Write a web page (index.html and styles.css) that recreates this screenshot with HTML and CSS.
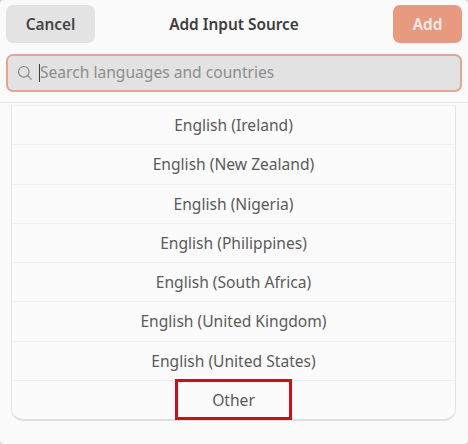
FILE: index.html
```html
<!DOCTYPE html>
<html lang="en">
<head>
    <meta charset="UTF-8">
    <meta name="viewport" content="width=device-width, initial-scale=1.0">
    <title>Add Input Source</title>
    <link rel="stylesheet" href="styles.css">
</head>
<body>
    <div class="dialog">
        <div class="header">
            <div class="title-row">
                <div class="side"><button class="btn cancel-btn">Cancel</button></div>
                <h1>Add Input Source</h1>
                <div class="side side-end"><button class="btn add-btn">Add</button></div>
            </div>
            <div class="search">
                <svg class="search-icon" width="16" height="16" viewBox="0 0 16 16">
                    <circle cx="6.8" cy="6.8" r="5.3" fill="none" stroke="#8a8a88" stroke-width="1.2"/>
                    <path d="M10.8 10.8 L14.6 14.6" stroke="#8a8a88" stroke-width="1.3"/>
                </svg>
                <span class="caret"></span>
                <span class="placeholder">Search languages and countries</span>
            </div>
        </div>
        <div class="content">
            <div class="list">
                <div class="row">English (Ireland)</div>
                <div class="row">English (New Zealand)</div>
                <div class="row">English (Nigeria)</div>
                <div class="row">English (Philippines)</div>
                <div class="row">English (South Africa)</div>
                <div class="row">English (United Kingdom)</div>
                <div class="row">English (United States)</div>
                <div class="row last-row">Other<span class="highlight"></span></div>
            </div>
        </div>
    </div>
</body>
</html>
```

FILE: styles.css
```css
html, body {
    margin: 0;
    padding: 0;
}

body {
    width: 468px;
    height: 444px;
    overflow: hidden;
    background: #cfcfcf;
    font-family: "Noto Sans", sans-serif;
    font-size: 15.6px;
    color: #3d3d3d;
}

.dialog {
    height: 444px;
    background: #fafafa;
    border-radius: 4px;
}

.header {
    height: 103px;
    box-sizing: border-box;
    padding: 5px 6px 0;
    border-bottom: 1px solid #e8e8e8;
}

.title-row {
    display: flex;
    align-items: center;
    height: 38px;
}

.side {
    flex: 1;
    display: flex;
}

.side-end {
    justify-content: flex-end;
}

h1 {
    margin: 0;
    font-size: 15.4px;
    font-weight: 600;
    color: #3d3d3d;
}

.btn {
    height: 38px;
    border: none;
    border-radius: 7px;
    font-family: inherit;
    font-size: 15.4px;
    font-weight: 600;
}

.cancel-btn {
    width: 89px;
    background: #e3e3e3;
    color: #454545;
}

.add-btn {
    width: 69px;
    background: #e89a80;
    color: #fbeee9;
}

.search {
    display: flex;
    align-items: center;
    height: 38px;
    box-sizing: border-box;
    margin-top: 11px;
    padding: 0 0 2px 9px;
    background: #e2e2e2;
    border: 2px solid #e4a690;
    border-radius: 7px;
    color: #8d8d8d;
}

.search-icon {
    flex: none;
    margin-top: 2px;
}

.caret {
    width: 1px;
    height: 18px;
    margin: 2px 0 0 6px;
    background: #3d3d3d;
}

.placeholder {
    font-size: 15.6px;
}

.content {
    padding: 2px 11px 0 11px;
}

.list {
    width: 445px;
    box-sizing: border-box;
    background: #fbfbfb;
    border: 1px solid #e4e4e4;
    border-top: 1px solid #efefef;
    border-bottom: 2px solid #e0e0e0;
    border-radius: 0 0 12px 12px;
}

.row {
    height: 38.3px;
    line-height: 38px;
    text-align: center;
    color: #5a5a5a;
    border-bottom: 1px solid #efefef;
}

.last-row {
    position: relative;
    border-bottom: none;
}

.highlight {
    position: absolute;
    left: 163px;
    top: -2px;
    width: 117px;
    height: 41px;
    box-sizing: border-box;
    border: 3px solid #e00610;
}
```
